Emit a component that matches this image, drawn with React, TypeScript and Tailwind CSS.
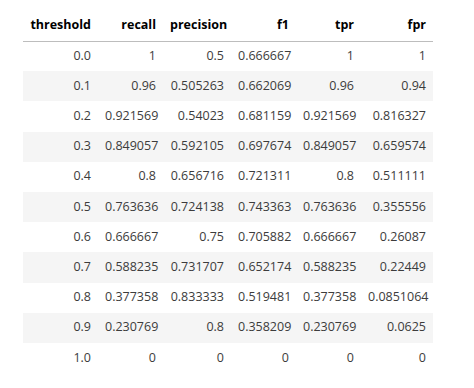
import React from "react";

const cols = ["threshold", "recall", "precision", "f1", "tpr", "fpr"];
const widths = ["w-[75px]", "w-[65px]", "w-[68px]", "w-[65px]", "w-[65px]", "w-[72px]"];
const rows = [
  ["0.0", "1", "0.5", "0.666667", "1", "1"],
  ["0.1", "0.96", "0.505263", "0.662069", "0.96", "0.94"],
  ["0.2", "0.921569", "0.54023", "0.681159", "0.921569", "0.816327"],
  ["0.3", "0.849057", "0.592105", "0.697674", "0.849057", "0.659574"],
  ["0.4", "0.8", "0.656716", "0.721311", "0.8", "0.511111"],
  ["0.5", "0.763636", "0.724138", "0.743363", "0.763636", "0.355556"],
  ["0.6", "0.666667", "0.75", "0.705882", "0.666667", "0.26087"],
  ["0.7", "0.588235", "0.731707", "0.652174", "0.588235", "0.22449"],
  ["0.8", "0.377358", "0.833333", "0.519481", "0.377358", "0.0851064"],
  ["0.9", "0.230769", "0.8", "0.358209", "0.230769", "0.0625"],
  ["1.0", "0", "0", "0", "0", "0"],
];

export default function App() {
  return (
    <div
      className="w-[474px] h-[388px] bg-white pt-[11px] pl-[23px]"
      style={{ fontFamily: '"Open Sans", "Noto Sans", sans-serif' }}
    >
      <table className="border-collapse table-fixed w-[410px] text-[12.5px]">
        <thead>
          <tr className="h-[30px] border-b border-[#bdbdbd]">
            {cols.map((c, i) => (
              <th
                key={c}
                className={`${widths[i]} text-right font-bold text-black px-[7px] whitespace-nowrap`}
              >
                {c}
              </th>
            ))}
          </tr>
        </thead>
        <tbody>
          {rows.map((r, ri) => (
            <tr key={ri} className={`h-[30.2px] ${ri % 2 === 1 ? "bg-[#f5f5f5]" : "bg-white"}`}>
              {r.map((v, ci) => (
                <td key={ci} className="text-right text-[#3c3c3c] px-[7px] whitespace-nowrap">
                  {v}
                </td>
              ))}
            </tr>
          ))}
        </tbody>
      </table>
    </div>
  );
}
